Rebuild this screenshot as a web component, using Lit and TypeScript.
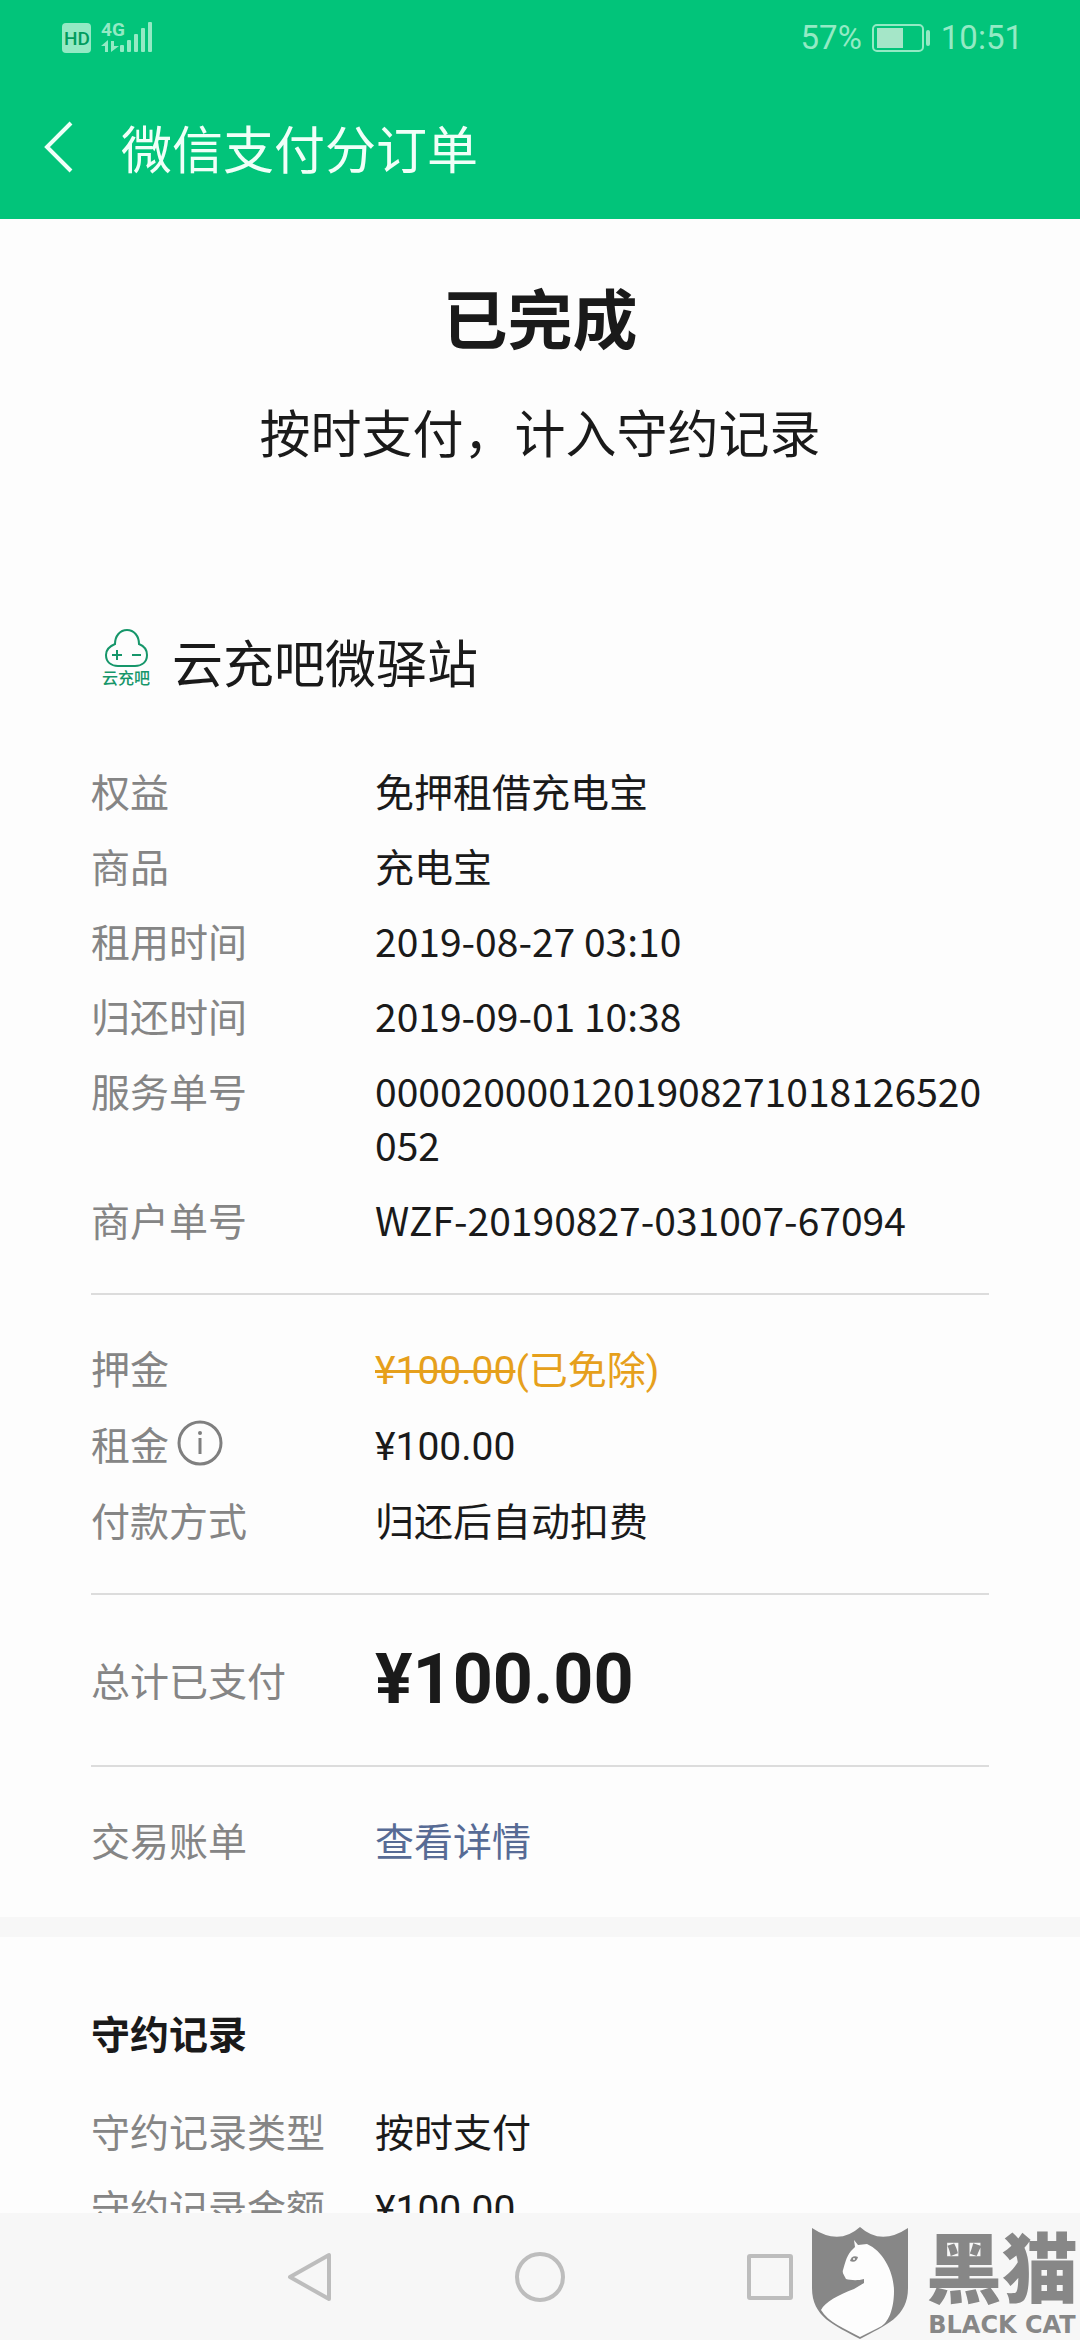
import { LitElement, html, css, svg, nothing } from "lit";
import { customElement, property } from "lit/decorators.js";

interface Row {
  label: string;
  value: string;
  kind?: "text" | "money" | "waived" | "link";
  info?: boolean;
}

const ORDER: Row[] = [
  { label: "权益", value: "免押租借充电宝" },
  { label: "商品", value: "充电宝" },
  { label: "租用时间", value: "2019-08-27 03:10" },
  { label: "归还时间", value: "2019-09-01 10:38" },
  { label: "服务单号", value: "0000200001201908271018126520052" },
  { label: "商户单号", value: "WZF-20190827-031007-67094" },
];

const PAYMENT: Row[] = [
  { label: "押金", value: "¥100.00", kind: "waived" },
  { label: "租金", value: "¥100.00", kind: "money", info: true },
  { label: "付款方式", value: "归还后自动扣费" },
];

const BILL: Row[] = [{ label: "交易账单", value: "查看详情", kind: "link" }];

const RECORD: Row[] = [
  { label: "守约记录类型", value: "按时支付" },
  { label: "守约记录金额", value: "¥100.00", kind: "money" },
];

@customElement("status-bar")
export class StatusBar extends LitElement {
  static styles = css`
    :host {
      display: flex;
      justify-content: space-between;
      align-items: center;
      height: 76px;
      padding: 0 57px 0 62px;
      color: #93eac4;
      font: 33px/40px Roboto, "Liberation Sans", sans-serif;
    }
    .group {
      display: flex;
      align-items: center;
      gap: 10px;
    }
    svg {
      display: block;
    }
    .badge {
      font: 500 19px Roboto, sans-serif;
      fill: #009c5e;
    }
    .net {
      font: 700 19px "Liberation Sans Narrow", Roboto, sans-serif;
      fill: currentColor;
    }
  `;

  render() {
    const bars = [7, 12, 18, 24, 30];
    return html`
      <div class="group">
        <svg width="92" height="44" viewBox="0 -6 92 44" role="img" aria-label="HD 4G">
          <rect x="0" y="1" width="29" height="30" rx="4" fill="currentColor" />
          <text class="badge" x="15" y="23" text-anchor="middle">HD</text>
          <text class="net" x="39" y="14">4G</text>
          <path d="M46 30h-3v-6h-4l7-6zM49 19h3v5h5l-8 6z" fill="currentColor" />
          ${bars.map(
            (h, i) =>
              svg`<rect x=${58 + i * 7} y=${30 - h} width="4" height=${h} rx="1" fill="currentColor" />`
          )}
        </svg>
      </div>
      <div class="group">
        <span>57%</span>
        <svg width="59" height="28" viewBox="0 0 59 28" aria-hidden="true">
          <rect x="1" y="1" width="50" height="26" rx="4" fill="none" stroke="currentColor" stroke-width="2" />
          <rect x="5" y="4" width="26" height="20" fill="#a5e6c8" />
          <rect x="54" y="6" width="4" height="16" rx="2" fill="currentColor" />
        </svg>
        <span>10:51</span>
      </div>
    `;
  }
}

@customElement("detail-list")
export class DetailList extends LitElement {
  @property({ attribute: false }) rows: Row[] = [];

  static styles = css`
    :host {
      display: block;
      font-size: 39px;
      line-height: 54px;
    }
    .list {
      display: flex;
      flex-direction: column;
      gap: 21px;
      margin: 0;
    }
    :host([loose]) .list {
      gap: 22px;
    }
    .row {
      display: grid;
      grid-template-columns: 284px minmax(0, 1fr);
      align-items: start;
    }
    .label {
      display: flex;
      align-items: center;
      gap: 8px;
      color: #858585;
      white-space: nowrap;
    }
    .value {
      margin: 0;
      color: #1a1a1a;
      overflow-wrap: anywhere;
    }
    .sum {
      font-family: Roboto, "Noto Sans CJK SC", sans-serif;
      line-height: 1;
    }
    .waived {
      color: #e6a01c;
    }
    .link {
      color: #576b95;
      text-decoration: none;
    }
    .info {
      display: block;
      padding: 0;
      border: 0;
      background: none;
      color: #7f7f7f;
    }
    .info svg {
      display: block;
    }
  `;

  private value(row: Row) {
    if (row.kind === "waived") return html`<s class="sum">${row.value}</s><span class="sum">(已免除)</span>`;
    if (row.kind === "money") return html`<span class="sum">${row.value}</span>`;
    if (row.kind === "link") return html`<a class="link" href="#bill">${row.value}</a>`;
    return row.value;
  }

  render() {
    return html`<dl class="list">
      ${this.rows.map(
        (row) => html`<div class="row">
          <dt class="label">
            ${row.label}${row.info
              ? html`<button class="info" aria-label="租金说明">
                  <svg width="46" height="46" viewBox="0 0 46 46" fill="none" stroke="currentColor" stroke-width="3">
                    <circle cx="23" cy="23" r="21" />
                    <path d="M23 18v16" />
                    <circle cx="23" cy="13" r="2" fill="currentColor" stroke="none" />
                  </svg>
                </button>`
              : nothing}
          </dt>
          <dd class="value ${row.kind ?? "text"}">${this.value(row)}</dd>
        </div>`
      )}
    </dl>`;
  }
}

@customElement("cat-mark")
export class CatMark extends LitElement {
  static styles = css`
    :host {
      display: flex;
      align-items: flex-end;
      gap: 17px;
      color: #878787;
    }
    svg {
      display: block;
    }
    .words {
      display: flex;
      flex-direction: column;
      align-items: center;
      white-space: nowrap;
    }
    .cn {
      font: 900 76px/92px "Noto Sans CJK SC", sans-serif;
    }
    .en {
      font: 700 24px/30px "DejaVu Sans", sans-serif;
    }
  `;

  render() {
    return html`
      <svg width="98" height="114" viewBox="0 0 98 114" aria-hidden="true">
        <path
          d="M1 2Q28 20 49 1Q70 20 97 2V62C97 91 75 99 49 113C23 99 1 91 1 62Z"
          fill="currentColor"
        />
        <path
          d="M43 14L47 19L56 18C72 25 83 46 83 65C83 82 78 98 67 102L49 111C34 103 17 96 10 84C14 76 27 69 43 63L53 57V53C46 55 39 54 35 53C33 49 31 47 32 44C34 38 35 31 40 25L44 21Z"
          fill="#fdfdfd"
        />
        <path d="M39 35C40 31 43 29 47 31C46 35 43 37 39 35Z" fill="currentColor" />
        <circle cx="43" cy="33" r="1" fill="#fdfdfd" />
      </svg>
      <div class="words">
        <span class="cn">黑猫</span>
        <span class="en">BLACK CAT</span>
      </div>
    `;
  }
}

@customElement("app-root")
export class AppRoot extends LitElement {
  static styles = css`
    :host {
      display: flex;
      flex-direction: column;
      height: 100vh;
      overflow: hidden;
      background: #fdfdfd;
      color: #1a1a1a;
      font-family: "Noto Sans CJK SC", sans-serif;
    }
    h1,
    h2,
    h3,
    p {
      margin: 0;
    }
    button {
      display: block;
      padding: 0;
      border: 0;
      background: none;
      color: inherit;
    }
    svg {
      display: block;
    }
    .top {
      flex: none;
      background: #02c47a;
    }
    .bar {
      display: flex;
      align-items: center;
      gap: 48px;
      height: 143px;
      padding: 0 44px 2px;
      box-sizing: border-box;
      color: #f0fff8;
    }
    .bar-title {
      font-size: 51px;
      font-weight: 400;
      line-height: 66px;
    }
    .scroll {
      flex: 1;
      min-height: 0;
      overflow: hidden;
    }
    .order {
      padding: 55px 91px 51px;
    }
    .state {
      text-align: center;
      font-size: 65px;
      font-weight: 700;
      line-height: 84px;
    }
    .note {
      margin-top: 40px;
      text-align: center;
      font-size: 51px;
      line-height: 66px;
    }
    .merchant {
      display: flex;
      align-items: center;
      gap: 22px;
      margin: 164px 0 69px;
      padding-left: 11px;
    }
    .merchant-name {
      font-size: 51px;
      font-weight: 400;
      line-height: 66px;
    }
    .logo-text {
      font: 500 16px "Noto Sans CJK SC", sans-serif;
      fill: #16966a;
    }
    .rule {
      height: 2px;
      margin: 47px 0 45px;
      border: 0;
      background: #dcdcdc;
    }
    .total {
      display: grid;
      grid-template-columns: 284px 1fr;
      align-items: center;
      margin: 0;
    }
    .total-label {
      color: #858585;
      font-size: 39px;
      line-height: 54px;
    }
    .amount {
      margin: 0;
      font: 700 70px/78px Roboto, sans-serif;
    }
    .record {
      padding: 68px 91px 0;
      border-top: 20px solid #f7f7f7;
    }
    .record-title {
      margin-bottom: 44px;
      font-size: 39px;
      font-weight: 700;
      line-height: 54px;
    }
    .nav {
      position: relative;
      display: flex;
      flex: none;
      align-items: center;
      justify-content: center;
      gap: 180px;
      height: 127px;
      background: #f7f7f7;
      color: #bdbdbd;
    }
    .mark {
      position: absolute;
      right: 2px;
      bottom: 0;
    }
  `;

  render() {
    return html`
      <header class="top">
        <status-bar></status-bar>
        <div class="bar">
          <button aria-label="返回">
            <svg width="29" height="52" viewBox="0 0 29 52" fill="none" stroke="currentColor" stroke-width="4">
              <path d="M27 2L3 26L27 50" />
            </svg>
          </button>
          <h1 class="bar-title">微信支付分订单</h1>
        </div>
      </header>

      <main class="scroll">
        <section class="order">
          <h2 class="state">已完成</h2>
          <p class="note">按时支付，计入守约记录</p>

          <div class="merchant">
            <svg width="48" height="64" viewBox="0 0 48 64" role="img" aria-label="云充吧">
              <path
                d="M13 15C13 7 18 1 25 1S37 7 37 15C42 17 45 21 45 26C45 33 40 37 33 37H16C9 37 4 33 4 26C4 21 8 17 13 15Z"
                fill="none"
                stroke="#16966a"
                stroke-width="2"
              />
              <path d="M10 26H20M15 21V31M30 26H39" stroke="#16966a" stroke-width="2" />
              <text class="logo-text" x="24" y="55" text-anchor="middle">云充吧</text>
            </svg>
            <h3 class="merchant-name">云充吧微驿站</h3>
          </div>

          <detail-list .rows=${ORDER}></detail-list>
          <hr class="rule" />
          <detail-list loose .rows=${PAYMENT}></detail-list>
          <hr class="rule" />
          <dl class="total">
            <dt class="total-label">总计已支付</dt>
            <dd class="amount">¥100.00</dd>
          </dl>
          <hr class="rule" />
          <detail-list .rows=${BILL}></detail-list>
        </section>

        <section class="record">
          <h2 class="record-title">守约记录</h2>
          <detail-list loose .rows=${RECORD}></detail-list>
        </section>
      </main>

      <nav class="nav" aria-label="系统导航">
        <button aria-label="后退">
          <svg width="50" height="50" viewBox="0 0 50 50" fill="none" stroke="currentColor" stroke-width="4" stroke-linejoin="round">
            <path d="M44 3V47L5 25Z" />
          </svg>
        </button>
        <button aria-label="主屏幕">
          <svg width="50" height="50" viewBox="0 0 50 50" fill="none" stroke="currentColor" stroke-width="4">
            <circle cx="25" cy="25" r="23" />
          </svg>
        </button>
        <button aria-label="最近任务">
          <svg width="50" height="50" viewBox="0 0 50 50" fill="none" stroke="currentColor" stroke-width="4">
            <rect x="4" y="4" width="42" height="42" rx="1" />
          </svg>
        </button>
        <cat-mark class="mark"></cat-mark>
      </nav>
    `;
  }
}
